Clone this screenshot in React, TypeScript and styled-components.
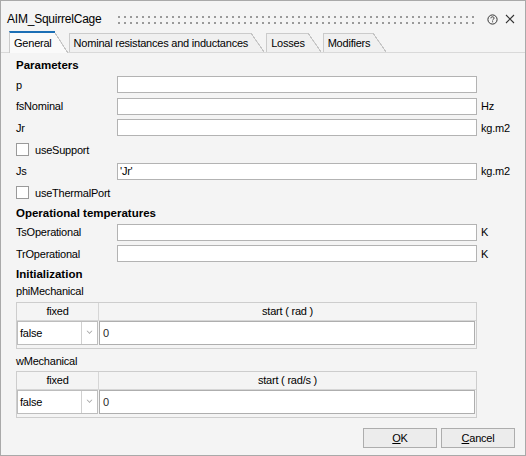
import React from "react";
import styled, { createGlobalStyle, css } from "styled-components";

const GlobalStyle = createGlobalStyle`
  html, body {
    margin: 0;
    padding: 0;
    background: #f4f4f4;
  }
  body {
    font-family: "Liberation Sans", Arial, sans-serif;
    font-size: 11px;
    color: #000;
  }
  #root {
    width: 526px;
    height: 456px;
  }
`;

const Window = styled.div`
  width: 526px;
  height: 456px;
  box-sizing: border-box;
  border: 1px solid #a9a9a9;
  background: #f4f4f4;
  display: flex;
  flex-direction: column;
  letter-spacing: -0.22px;
`;

const TitleBar = styled.div`
  height: 30px;
  box-sizing: border-box;
  padding: 6px 10px 0 6px;
  display: flex;
  align-items: center;
`;

const Title = styled.div`
  font-size: 12px;
  line-height: 16px;
`;

const Grip = styled.div`
  flex: 1;
  height: 8px;
  margin: 1px 12px 0 16px;
  background-image: radial-gradient(circle at 1px 1px, #9a9a9a 0.9px, transparent 1.1px);
  background-size: 6px 6px;
`;

const TitleButtons = styled.div`
  display: flex;
  align-items: center;
  gap: 7px;
  color: #333;
`;

const TabStrip = styled.div`
  height: 22px;
  box-sizing: border-box;
  border-bottom: 1px solid #d9d9d9;
  padding-left: 8px;
  display: flex;
  align-items: flex-end;
`;

const Tab = styled.div<{ $active?: boolean }>`
  position: relative;
  box-sizing: border-box;
  height: 19px;
  padding: 0 3px 0 4px;
  margin-right: 15px;
  display: flex;
  align-items: center;
  border-top: 1px solid #cbcbcb;
  border-left: 1px solid #cbcbcb;
  background: #f0f0f0;
  white-space: nowrap;

  &::after {
    content: "";
    position: absolute;
    left: 100%;
    top: -1px;
    width: 13px;
    height: calc(100% + 1px);
    background: linear-gradient(
      to top right,
      ${(p) => (p.$active ? "#fafafa" : "#f0f0f0")} calc(50% - 0.6px),
      #c4c4c4 calc(50% - 0.5px),
      #c4c4c4 calc(50% + 0.5px),
      transparent calc(50% + 0.6px)
    );
  }

  ${(p) =>
    p.$active &&
    css`
      height: 22px;
      margin-bottom: -1px;
      padding-bottom: 1px;
      border-top: 2px solid #1c6fb5;
      background: #fafafa;
      margin-right: 14px;
      &::after {
        top: 0;
        height: 100%;
      }
    `}
`;

const Content = styled.div`
  padding: 3px 15px 0 15px;
  display: flex;
  flex-direction: column;
`;

const SectionTitle = styled.div`
  height: 18px;
  line-height: 18px;
  font-weight: bold;
  font-size: 11.5px;
  letter-spacing: 0;
`;

const Row = styled.div`
  height: 21.6px;
  display: grid;
  grid-template-columns: 101px 360px auto;
  align-items: center;
`;

const Label = styled.div`
  white-space: nowrap;
`;

const TextInput = styled.input`
  height: 17px;
  box-sizing: border-box;
  margin: 0;
  border: 1px solid #b3b3b3;
  background: #fff;
  padding: 0 2px;
  font: inherit;
  letter-spacing: inherit;
  color: #000;
  outline: none;
`;

const Unit = styled.div`
  padding-left: 4px;
  white-space: nowrap;
`;

const CheckRow = styled.div`
  height: 21.6px;
  display: flex;
  align-items: center;
  gap: 6px;
`;

const CheckBox = styled.span`
  width: 13px;
  height: 13px;
  box-sizing: border-box;
  border: 1px solid #9a9a9a;
  background: #fff;
`;

const SubLabel = styled.div<{ $spaced?: boolean }>`
  height: 16px;
  line-height: 16px;
  margin-top: ${(p) => (p.$spaced ? "4px" : "0")};
`;

const Table = styled.div<{ $gap: number }>`
  width: 461px;
  box-sizing: border-box;
  margin-top: ${(p) => p.$gap}px;
  border: 1px solid #cdcdcd;
  background: #f4f4f4;
`;

const HeaderRow = styled.div`
  height: 18px;
  box-sizing: border-box;
  display: grid;
  grid-template-columns: 81px 1fr;
  border-bottom: 1px solid #d6d6d6;
`;

const HeaderCell = styled.div<{ $first?: boolean }>`
  display: flex;
  align-items: center;
  justify-content: center;
  border-left: ${(p) => (p.$first ? "none" : "1px solid #d6d6d6")};
`;

const DataRow = styled.div`
  height: 24px;
  display: flex;
`;

const FixedCell = styled.div`
  width: 81px;
  box-sizing: border-box;
  display: flex;
  border: 1px solid #bdbdbd;
  background: #fff;
`;

const FixedValue = styled.div`
  flex: 1;
  display: flex;
  align-items: center;
  padding-left: 2px;
`;

const ArrowBox = styled.div`
  width: 15px;
  border-left: 1px solid #d0d0d0;
  display: flex;
  align-items: center;
  justify-content: center;
`;

const StartCell = styled.div`
  flex: 1;
  margin-left: 1px;
  margin-right: 1px;
  box-sizing: border-box;
  border: 1px solid #aeaeae;
  background: #fff;
  display: flex;
  align-items: center;
  padding-left: 3px;
  color: #2a2a2a;
`;

const TableFoot = styled.div`
  height: 3px;
`;

const Footer = styled.div`
  margin-top: auto;
  padding: 0 10px 7px 0;
  display: flex;
  justify-content: flex-end;
  gap: 4px;
`;

const Button = styled.div`
  width: 74px;
  height: 20px;
  box-sizing: border-box;
  border: 1px solid #adadad;
  background: #ececec;
  display: flex;
  align-items: center;
  justify-content: center;
`;

const HelpIcon = () => (
  <svg width="11" height="11" viewBox="0 0 11 11">
    <circle cx="5.5" cy="5.5" r="4.6" fill="none" stroke="#333" strokeWidth="1" />
    <path
      d="M3.9 4.3 C3.9 3.3 4.6 2.8 5.5 2.8 C6.4 2.8 7.1 3.4 7.1 4.2 C7.1 5.1 5.6 5.3 5.6 6.4"
      fill="none"
      stroke="#333"
      strokeWidth="1"
    />
    <rect x="5.1" y="7.3" width="1" height="1" fill="#333" />
  </svg>
);

const CloseIcon = () => (
  <svg width="10" height="10" viewBox="0 0 10 10">
    <path d="M1 1 L9 9 M9 1 L1 9" stroke="#333" strokeWidth="1.1" />
  </svg>
);

const Arrow = () => (
  <svg width="7" height="5" viewBox="0 0 7 5">
    <path d="M0.5 0.8 L3.5 4 L6.5 0.8 L5.3 0.8 L3.5 2.7 L1.7 0.8 Z" fill="#a8a8a8" />
  </svg>
);

type ParamRow = { label: string; value?: string; unit?: string };

const InputRow = ({ label, value, unit }: ParamRow) => (
  <Row>
    <Label>{label}</Label>
    <TextInput readOnly defaultValue={value ?? ""} />
    {unit ? <Unit>{unit}</Unit> : <span />}
  </Row>
);

const StartTable = ({ unit, gap }: { unit: string; gap: number }) => (
  <Table $gap={gap}>
    <HeaderRow>
      <HeaderCell $first>fixed</HeaderCell>
      <HeaderCell>start ( {unit} )</HeaderCell>
    </HeaderRow>
    <DataRow>
      <FixedCell>
        <FixedValue>false</FixedValue>
        <ArrowBox>
          <Arrow />
        </ArrowBox>
      </FixedCell>
      <StartCell>0</StartCell>
    </DataRow>
    <TableFoot />
  </Table>
);

const tabs = ["General", "Nominal resistances and inductances", "Losses", "Modifiers"];

export default function App() {
  return (
    <>
      <GlobalStyle />
      <Window>
        <TitleBar>
          <Title>AIM_SquirrelCage</Title>
          <Grip />
          <TitleButtons>
            <HelpIcon />
            <CloseIcon />
          </TitleButtons>
        </TitleBar>
        <TabStrip>
          {tabs.map((t, i) => (
            <Tab key={t} $active={i === 0}>
              {t}
            </Tab>
          ))}
        </TabStrip>
        <Content>
          <SectionTitle>Parameters</SectionTitle>
          <InputRow label="p" />
          <InputRow label="fsNominal" unit="Hz" />
          <InputRow label="Jr" unit="kg.m2" />
          <CheckRow>
            <CheckBox />
            <span>useSupport</span>
          </CheckRow>
          <InputRow label="Js" value="'Jr'" unit="kg.m2" />
          <CheckRow>
            <CheckBox />
            <span>useThermalPort</span>
          </CheckRow>
          <SectionTitle>Operational temperatures</SectionTitle>
          <InputRow label="TsOperational" unit="K" />
          <InputRow label="TrOperational" unit="K" />
          <SectionTitle>Initialization</SectionTitle>
          <SubLabel>phiMechanical</SubLabel>
          <StartTable unit="rad" gap={3} />
          <SubLabel $spaced>wMechanical</SubLabel>
          <StartTable unit="rad/s" gap={2} />
        </Content>
        <Footer>
          <Button>
            <span>
              <u>O</u>K
            </span>
          </Button>
          <Button>
            <span>
              <u>C</u>ancel
            </span>
          </Button>
        </Footer>
      </Window>
    </>
  );
}
